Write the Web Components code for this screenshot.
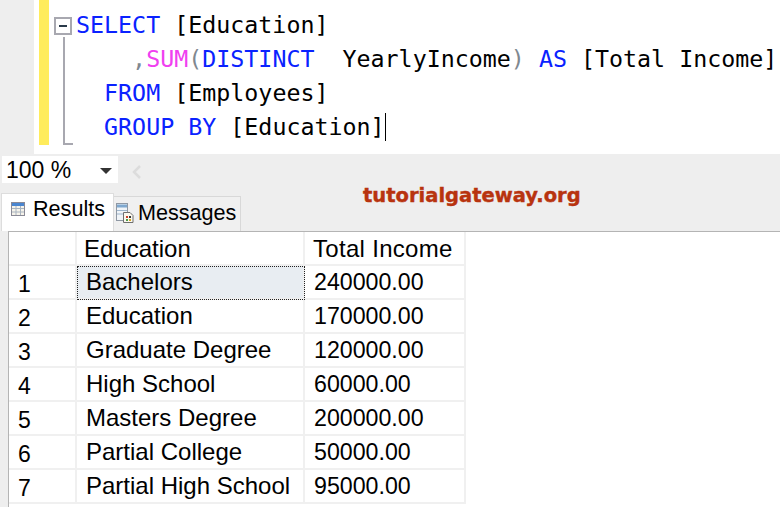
<!DOCTYPE html>
<html><head><meta charset="utf-8"><style>
html,body{margin:0;padding:0;width:780px;height:507px;overflow:hidden;background:#eee;font-family:"Liberation Sans",Arial,sans-serif}
</style></head><body>
<query-window></query-window>
<script>
function el(name,css,html){
  customElements.define(name,class extends HTMLElement{
    connectedCallback(){ if(this.shadowRoot) return;
      this.attachShadow({mode:'open'}).innerHTML='<style>'+css+'</style>'+html(this);
    }
  });
}
el('sql-line',`
 :host{display:block;height:34px;white-space:pre;font:23.3px/34px "DejaVu Sans Mono",monospace;color:#000;position:relative}
`,()=>'<slot></slot>');

el('sql-editor',`
 :host{display:flex;height:154px;background:#eee}
 .pane{margin-left:34px;flex:1;background:#fff;display:flex;padding-left:5px;min-width:0}
 .mod{width:10px;height:145px;background:#ffec5c;flex:none}
 .fold{width:27px;flex:none;position:relative;height:145px}
 .box{position:absolute;left:5px;top:17px;width:14px;height:14px;border:2px solid #a8a8b0;background:#fff}
 .box i{position:absolute;left:3px;top:6px;width:8px;height:2px;background:#2a3a4a}
 .rail{position:absolute;left:14px;top:37px;width:8px;height:106px;border-left:2px solid #a8a8b0;border-bottom:2px solid #a8a8b0}
 .code{padding-top:8px;flex:1;min-width:0}
 .k{color:#0a22ff}.f{color:#f040f0}.g{color:#808890}
 .cur{position:absolute;display:inline-block;width:1.5px;height:28px;background:#000;top:3px;margin-left:0}
`,()=>`<div class="pane"><div class="mod"></div><div class="fold"><div class="box"><i></i></div><div class="rail"></div></div>
 <div class="code">
 <sql-line><span class="k">SELECT</span> [Education]</sql-line>
 <sql-line>    <span class="g">,</span><span class="f">SUM</span><span class="g">(</span><span class="k">DISTINCT</span>  YearlyIncome<span class="g">)</span> <span class="k">AS</span> [Total Income]</sql-line>
 <sql-line>  <span class="k">FROM</span> [Employees]</sql-line>
 <sql-line>  <span class="k">GROUP</span> <span class="k">BY</span> [Education]<span class="cur"></span></sql-line>
 </div></div>`);

el('zoom-bar',`
 :host{display:flex;height:38px;box-sizing:border-box;padding:2px 0 0 2px;background:#eee;position:relative}
 .combo{width:116px;height:27px;background:#fff;box-sizing:border-box;padding:2px 0 0 4px;display:flex;align-items:center;font-size:23px;color:#000}
 .combo span{flex:1}
 .arrow{width:0;height:0;border-left:6px solid transparent;border-right:6px solid transparent;border-top:6px solid #333;margin-right:6px}
 svg{margin:9px 0 0 13px}
 .brand{position:absolute;left:363px;top:30px;font:bold 19.5px/24px "DejaVu Sans",sans-serif;color:#b8330f;-webkit-text-stroke:.4px #b8330f}
`,()=>`<div class="combo"><span>100 %</span><i class="arrow"></i></div>
 <svg width="12" height="14" viewBox="0 0 12 14"><path d="M9 1 3 7l6 6" fill="none" stroke="#dcdcdc" stroke-width="2.5"/></svg>
 <div class="brand">tutorialgateway.org</div>`);

el('result-tabs',`
 :host{display:flex;align-items:flex-end;height:39px;box-sizing:border-box;background:#eee;padding-left:1px;font-size:21.6px;color:#000}
 .tab{box-sizing:border-box;display:flex;align-items:center}
 .a{width:113px;height:38px;background:#fff;border:1px solid #ddd;border-bottom:0;padding:0 0 8px 9px;gap:8px}
 .b{width:127px;height:35px;background:#f0f0f0;border:1px solid #d8d8d8;border-bottom:0;border-left:0;padding:0 0 2px 2px;gap:4px}
`,()=>`<div class="tab a"><svg width="14" height="14" viewBox="0 0 14 14"><rect x=".5" y=".5" width="13" height="13" fill="#f6f3ea" stroke="#8a8a96"/><path d="M1 2.500h12" stroke="#4a86d0" stroke-width="3"/><path d="M1 6.500h12M1 10h12M5 4v9M9.500 4v9" stroke="#a9b4c0"/></svg><span>Results</span></div>
 <div class="tab b"><svg width="18" height="20" viewBox="0 0 18 20"><rect x=".5" y=".5" width="11" height="17" fill="#f0f4f8" stroke="#8f98a4"/><path d="M1 3h10" stroke="#7fa8cf" stroke-width="3"/><path d="M1 7.500h10M1 11h6" stroke="#9fb6cc"/><path d="M7.500 9.500H14l3 3v7H7.500z" fill="#fbf8ee" stroke="#6f6f6f"/><path d="M10 13h2v2h-2z" fill="#c9402a"/><path d="M13 13h2v2h-2z" fill="#333"/><path d="M10 16h2v2h-2z" fill="#4a9a4a"/><path d="M13 16h2v2h-2z" fill="#d9a520"/></svg><span>Messages</span></div>`);

el('grid-row',`
 :host{display:grid;grid-template-columns:68px 228px 161px;height:34px;font-size:24px;line-height:32px;color:#000}
 ::slotted(*){box-sizing:border-box;height:34px;border-right:2px solid #f0f0f0;border-bottom:2px solid #f0f0f0;white-space:nowrap}
`,()=>'<slot></slot>');

el('grid-cell',`
 :host{display:block;padding-left:9px;overflow:visible}
 :host([sel]){background:#e8edf2;outline:1px dotted #222;outline-offset:-1px}
 :host([n]){padding-left:9px;line-height:36px;font-size:23px}
 :host([num]){font-size:23.2px}
 :host([h]){padding-top:1px;padding-left:7px}
 :host([t]){padding-left:8px;letter-spacing:.3px}
`,()=>'<slot></slot>');

el('result-grid',`
 :host{display:block;height:276px;box-sizing:border-box;margin-left:8px;background:#fff;border-left:1px solid #b4b4b4;border-top:1px solid #b4b4b4;overflow:hidden}
`,()=>{
  const rows=[['Bachelors','240000.00'],['Education','170000.00'],['Graduate Degree','120000.00'],['High School','60000.00'],['Masters Degree','200000.00'],['Partial College','50000.00'],['Partial High School','95000.00']];
  return `<grid-row><grid-cell></grid-cell><grid-cell h>Education</grid-cell><grid-cell h t>Total Income</grid-cell></grid-row>`+
  rows.map((r,i)=>`<grid-row><grid-cell n>${i+1}</grid-cell><grid-cell ${i==0?'sel':''}>${r[0]}</grid-cell><grid-cell num>${r[1]}</grid-cell></grid-row>`).join('');
});

el('query-window',`
 :host{display:block;width:780px;height:507px;overflow:hidden;background:#eee;position:relative}
`,()=>`<sql-editor></sql-editor><zoom-bar></zoom-bar><result-tabs></result-tabs><result-grid></result-grid>`);
</script>
</body></html>
